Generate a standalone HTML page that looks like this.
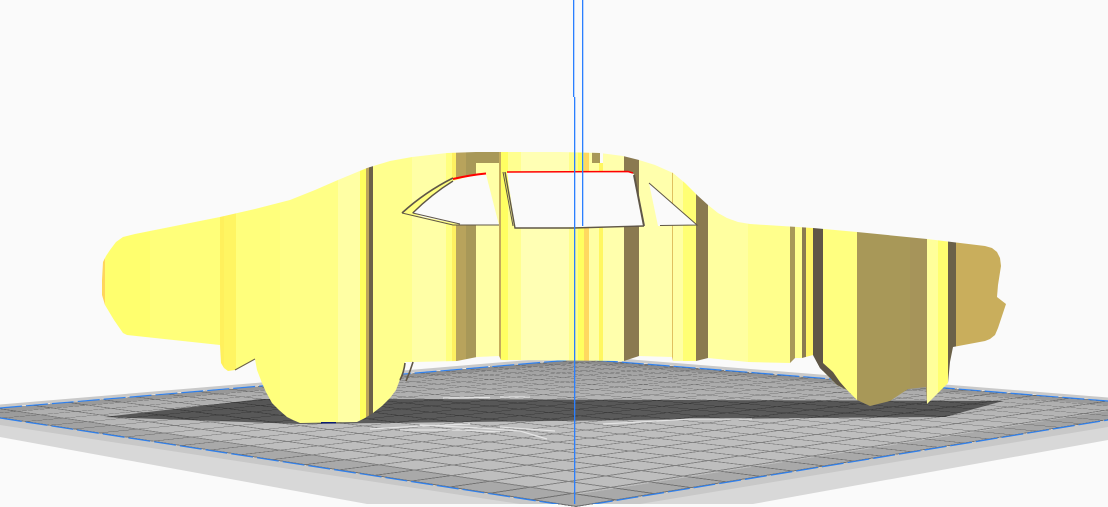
<!DOCTYPE html>
<html>
<head>
<meta charset="utf-8">
<style>
html,body{margin:0;padding:0;width:1108px;height:504px;overflow:hidden;background:#fafafa}
#p{position:absolute;left:0;top:0;width:1000px;height:1000px;transform-origin:0 0;
transform:matrix3d(.82046,.06868,0,.00033756,.43773,-.06317,0,-.00031296,0,0,1,0,-42,411.5,0,1);
background-color:#bebebe;
background-image:repeating-linear-gradient(90deg,#7f7f7f 0,#7f7f7f 4px,transparent 4px,transparent 45px),repeating-linear-gradient(0deg,#7f7f7f 0,#7f7f7f 4px,transparent 4px,transparent 50px)}
#b{position:absolute;left:0;top:0;width:1000px;height:1000px;box-sizing:border-box;border:45px solid rgba(0,0,0,.11)}
#o{position:absolute;left:0;top:0;width:1000px;height:1000px;background:radial-gradient(circle at 0% 100%,rgba(0,0,0,0) 45%,rgba(0,0,0,.2) 100%)}
svg{position:absolute;left:0;top:0}
</style>
</head>
<body>
<svg width="1108" height="504" viewBox="0 0 1108 504" style="z-index:0">
<polygon points="0,418 576,507 1108,420 1108,440 753,504 367,504 0,437" fill="#d8d8d8"/>
</svg>
<div id="p"><div id="o"></div><div id="b"></div></div>
<svg width="1108" height="504" viewBox="0 0 1108 504" style="z-index:2">
<defs>
<clipPath id="c"><path d="M103,262 L106,256 L110,250 L116,242 L123,237 L135,234 L220,217 L255,209 L290,200 L315,190 L338,180 L367,168 L390,161 L412,157 L447,153 L476,152 L560,152 L600,153 L623,156 L639,160 L655,165 L673,173 L685,183 L697,195 L708,205 L718,213 L727,218 L738,222 L750,224 L813,228 L857,232 L927,239 L985,246 L992,248 L997,252 L1000,258 L1001,266 L998,285 L997,297 L1006,304 L998,328 L995,335 L990,339 L985,341 L953,347 L950,362 L948,383 L927,404 L926,387 L908,389 L890,401 L870,406 L857,400 L847,390 L837,385 L820,368 L813,355 L802,358 L795,358 L790,363 L748,362 L708,358 L696,361 L673,361 L672,357 L639,356 L624,361 L501,360 L499,356 L477,357 L457,361 L413,362 L405,362 L402,374 L396,390 L390,398 L382,406 L373,413 L365,418 L357,422 L300,423 L293,420 L287,417 L279,410 L272,403 L266,392 L262,383 L257,370 L255,359 L235,370 L228,371 L224,368 L221,363 L220,345 L127,335 L123,333 L114,320 L105,305 L102,295 L102,280 Z"/></clipPath>
</defs>
<!-- plate edge strips -->
<polygon points="0,418 576,507 1108,420 1108,427 640,504 520,504 0,425" fill="#c8c8c8"/>
<polyline points="0,406 582,357 1108,399" fill="none" stroke="#c9c9c9" stroke-width="3"/>
<polyline points="0,408 582,359 1108,401" fill="none" stroke="#2f80ed" stroke-width="1.2" stroke-dasharray="22 4"/>
<polyline points="0,418 576,507 1108,420" fill="none" stroke="#2f80ed" stroke-width="1.2" stroke-dasharray="22 4"/>
<!-- shadow -->
<polygon points="104,417 261,399 380,399 1003,401 945,417 800,418 550,421 300,424" fill="#000" opacity=".52"/>
<!-- specks -->
<g fill="none" stroke="#e4e4e4" stroke-width="1.2">
<path d="M443,398 L490,397.5"/>
<path d="M500,397 L530,397"/>
<path d="M370,429 L420,426 L470,424"/>
<path d="M400,430 L460,430 L500,432"/>
<path d="M420,425 L480,428 L520,431 L547,439"/>
<path d="M500,427 L555,431"/>
<path d="M603,424 L640,422 L690,419 L752,419"/>
</g>
<!-- car -->
<g clip-path="url(#c)">
<rect x="100" y="140" width="5" height="300" fill="#ffd65c"/>
<rect x="105" y="140" width="45" height="300" fill="#ffff6e"/>
<rect x="150" y="140" width="70" height="300" fill="#ffff7a"/>
<rect x="220" y="140" width="4" height="300" fill="#fff05c"/>
<rect x="224" y="140" width="12" height="300" fill="#fff562"/>
<rect x="236" y="140" width="44" height="300" fill="#ffff7c"/>
<rect x="280" y="140" width="58" height="300" fill="#ffff86"/>
<rect x="338" y="140" width="22" height="300" fill="#ffffa4"/>
<rect x="360" y="140" width="6" height="300" fill="#ffff5e"/>
<rect x="366" y="140" width="3" height="300" fill="#bca55a"/>
<rect x="369" y="140" width="4" height="300" fill="#6b6149"/>
<rect x="373" y="140" width="39" height="300" fill="#ffff8e"/>
<rect x="412" y="140" width="34" height="300" fill="#ffffa6"/>
<rect x="446" y="140" width="6" height="300" fill="#ffff80"/>
<rect x="452" y="140" width="4" height="300" fill="#fff060"/>
<rect x="456" y="140" width="10" height="300" fill="#b8a35c"/>
<rect x="466" y="140" width="10" height="300" fill="#a89858"/>
<rect x="476" y="140" width="23" height="300" fill="#ffffa6"/>
<rect x="476" y="140" width="23" height="23" fill="#a89858"/>
<rect x="499" y="140" width="2" height="300" fill="#c4ac5c"/>
<rect x="501" y="140" width="7" height="300" fill="#ffff62"/>
<rect x="508" y="140" width="13" height="300" fill="#ffff90"/>
<rect x="521" y="140" width="48" height="300" fill="#ffffb4"/>
<rect x="569" y="140" width="9" height="300" fill="#ffff8a"/>
<rect x="578" y="140" width="6" height="300" fill="#ffff60"/>
<rect x="584" y="140" width="5" height="300" fill="#ffd960"/>
<rect x="589" y="140" width="10" height="300" fill="#ffffa4"/>
<rect x="592" y="140" width="8" height="23" fill="#a89858"/>
<rect x="599" y="163" width="4" height="277" fill="#fff760"/>
<rect x="603" y="140" width="21" height="300" fill="#ffffac"/>
<rect x="624" y="140" width="15" height="300" fill="#8a7a50"/>
<rect x="639" y="140" width="33" height="300" fill="#ffffac"/>
<rect x="672" y="140" width="1" height="300" fill="#e0c060"/>
<rect x="673" y="140" width="10" height="300" fill="#ffffa4"/>
<rect x="683" y="140" width="13" height="300" fill="#ffff74"/>
<rect x="696" y="140" width="12" height="300" fill="#8a7a50"/>
<rect x="708" y="140" width="40" height="300" fill="#ffffa0"/>
<rect x="748" y="140" width="42" height="300" fill="#ffff8c"/>
<rect x="790" y="140" width="5" height="300" fill="#a89858"/>
<rect x="795" y="140" width="7" height="300" fill="#ffff90"/>
<rect x="802" y="140" width="4" height="300" fill="#8a7a50"/>
<rect x="806" y="140" width="7" height="300" fill="#fff566"/>
<rect x="813" y="140" width="10" height="300" fill="#5f5647"/>
<rect x="823" y="140" width="34" height="300" fill="#ffff80"/>
<rect x="857" y="140" width="53" height="300" fill="#a89858"/>
<rect x="910" y="140" width="17" height="300" fill="#a6945a"/>
<rect x="927" y="140" width="11" height="300" fill="#ffff9a"/>
<rect x="938" y="140" width="10" height="300" fill="#ffff70"/>
<rect x="948" y="140" width="8" height="300" fill="#6b6149"/>
<rect x="956" y="140" width="56" height="300" fill="#c9ae5c"/>
<path d="M823,363 L833,372 L840,382 L847,390 L857,402 L837,395 L815,370 L813,355 Z" fill="#5f5647"/>
</g>
<!-- car slivers -->
<polyline points="235,370 255,359" fill="none" stroke="#6b6149" stroke-width="1"/>
<path d="M405,363 Q404,372 400,380" fill="none" stroke="#5f5647" stroke-width="1.6"/>
<path d="M413,362 Q410,372 406,381" fill="none" stroke="#5f5647" stroke-width="1.6"/>
<rect x="321" y="422" width="15" height="1.5" fill="#0a1a70"/>
<!-- rear window -->
<path d="M402,213 Q425,192 453,178 L486,174 L499,225 L453,225 Z" fill="#ffff80"/>
<path d="M412.7,213 Q432,194 453,181 L467,177 L486,174 L499,225 L463,225 L423,217 Z" fill="#fafafa"/>
<path d="M402,213 Q425,192 453,178" fill="none" stroke="#5f5647" stroke-width="1.6"/>
<path d="M412.7,213 Q432,194 453,181" fill="none" stroke="#5f5647" stroke-width="1.4"/>
<path d="M402,213 L453,225 L499,225" fill="none" stroke="#5f5647" stroke-width="1"/>
<path d="M412.7,213 L460,224" fill="none" stroke="#5f5647" stroke-width="1"/>
<path d="M453,179 Q470,175 486,173.5" fill="none" stroke="#f00" stroke-width="2"/>
<!-- middle window -->
<path d="M507,172 L630,172 Q634,173 635,177 L645,226 L515,228 Z" fill="#fafafa"/>
<path d="M505,172 L515,228 L573,228 L644,226" fill="none" stroke="#5f5647" stroke-width="1.4"/>
<path d="M634,175 L644,226" fill="none" stroke="#5f5647" stroke-width="2"/>
<path d="M503,172 L513,226" fill="none" stroke="#5f5647" stroke-width="1"/>
<path d="M507,172 L628,171.5 L633,173" fill="none" stroke="#f00" stroke-width="1.6"/>
<!-- front window -->
<path d="M649,183 L697,225 L658,226 Z" fill="#fafafa"/>
<path d="M649,183 L697,225 L660,225.5" fill="none" stroke="#5f5647" stroke-width="1"/>
<!-- blue vertical lines -->
<rect x="573" y="0" width="1.3" height="97" fill="#2a7fff"/>
<rect x="574" y="97" width="1.3" height="407" fill="#2a7fff"/>
<rect x="582" y="0" width="1.3" height="226" fill="#2a7fff"/>
</svg>
</body>
</html>
